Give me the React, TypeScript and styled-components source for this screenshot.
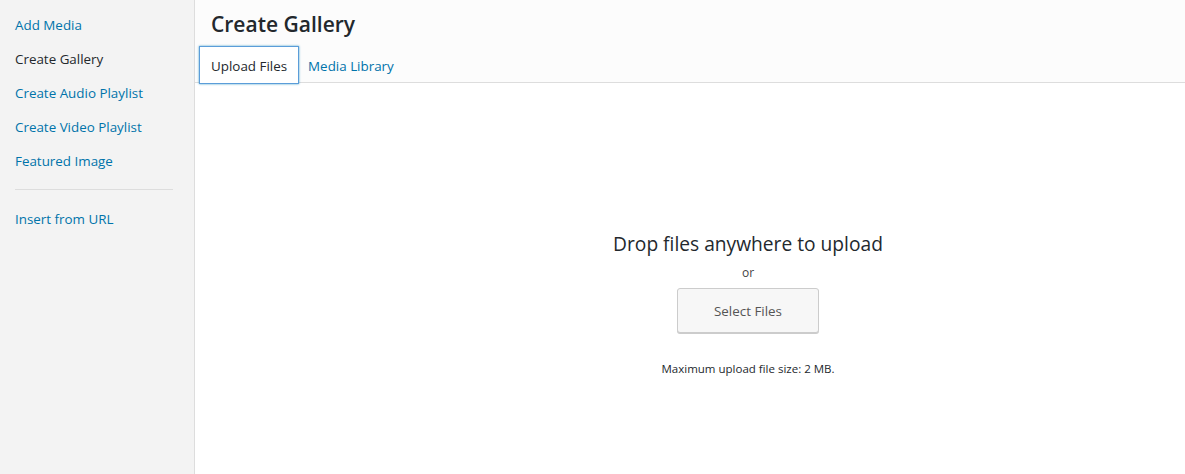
import styled, { createGlobalStyle } from "styled-components";

const Global = createGlobalStyle`
  html, body {
    margin: 0;
    padding: 0;
    background: #ffffff;
    font-family: "Open Sans", "Noto Sans", sans-serif;
  }
`;

const Frame = styled.div`
  display: flex;
  width: 1185px;
  height: 474px;
  overflow: hidden;
`;

const Menu = styled.nav`
  width: 194px;
  flex-shrink: 0;
  background: #f3f3f3;
  border-right: 1px solid #dddddd;
  padding-top: 15px;
  box-sizing: content-box;
`;

const MenuItem = styled.a<{ $active?: boolean }>`
  display: block;
  padding: 0 15px;
  height: 34px;
  line-height: 20px;
  font-size: 13.4px;
  color: ${(p) => (p.$active ? "#23282d" : "#0073aa")};
  text-decoration: none;
  cursor: pointer;
`;

const Separator = styled.div`
  height: 1px;
  background: #dddddd;
  margin: 4px 21px 19px 15px;
`;

const Main = styled.main`
  flex: 1;
  display: flex;
  flex-direction: column;
`;

const Header = styled.header`
  background: #fcfcfc;
  border-bottom: 1px solid #dddddd;
  height: 83px;
  box-sizing: border-box;
  display: flex;
  flex-direction: column;
`;

const Title = styled.h1`
  margin: 0;
  padding: 9px 0 0 16px;
  height: 37px;
  flex-shrink: 0;
  font-size: 21px;
  font-weight: 600;
  color: #23282d;
  line-height: 30px;
`;

const Tabs = styled.div`
  display: flex;
  flex-shrink: 0;
  padding-left: 4px;
`;

const Tab = styled.a<{ $active?: boolean }>`
  display: block;
  height: 38px;
  box-sizing: border-box;
  padding: 0 ${(p) => (p.$active ? "11px" : "8px")};
  line-height: 38px;
  font-size: 13.4px;
  text-decoration: none;
  cursor: pointer;
  color: ${(p) => (p.$active ? "#23282d" : "#0073aa")};
  border: 1px solid ${(p) => (p.$active ? "#5b9dd9" : "transparent")};
  box-shadow: ${(p) => (p.$active ? "0 0 2px rgba(30,140,190,0.8)" : "none")};
  background: ${(p) => (p.$active ? "#ffffff" : "transparent")};
  position: relative;
  z-index: 1;
`;

const Uploader = styled.section`
  flex: 1;
  display: flex;
  flex-direction: column;
  align-items: center;
  padding-left: 116px;
  padding-top: 148px;
`;

const DropText = styled.h2`
  margin: 0;
  font-size: 19.2px;
  font-weight: 400;
  color: #23282d;
  line-height: 26px;
`;

const Or = styled.p`
  margin: 7px 0 6px;
  font-size: 12px;
  color: #444;
  line-height: 18px;
`;

const SelectButton = styled.button`
  width: 142px;
  height: 45px;
  background: #f7f7f7;
  border: 1px solid #cccccc;
  border-radius: 3px;
  box-shadow: 0 1px 0 #cccccc;
  font-family: inherit;
  font-size: 13.4px;
  color: #555555;
  cursor: pointer;
`;

const MaxSize = styled.p`
  margin: 28px 0 0;
  font-size: 11.5px;
  line-height: 16px;
  color: #23282d;
`;

export default function App() {
  return (
    <>
      <Global />
      <Frame>
        <Menu>
          <MenuItem>Add Media</MenuItem>
          <MenuItem $active>Create Gallery</MenuItem>
          <MenuItem>Create Audio Playlist</MenuItem>
          <MenuItem>Create Video Playlist</MenuItem>
          <MenuItem>Featured Image</MenuItem>
          <Separator />
          <MenuItem>Insert from URL</MenuItem>
        </Menu>
        <Main>
          <Header>
            <Title>Create Gallery</Title>
            <Tabs>
              <Tab $active>Upload Files</Tab>
              <Tab>Media Library</Tab>
            </Tabs>
          </Header>
          <Uploader>
            <DropText>Drop files anywhere to upload</DropText>
            <Or>or</Or>
            <SelectButton>Select Files</SelectButton>
            <MaxSize>Maximum upload file size: 2 MB.</MaxSize>
          </Uploader>
        </Main>
      </Frame>
    </>
  );
}
